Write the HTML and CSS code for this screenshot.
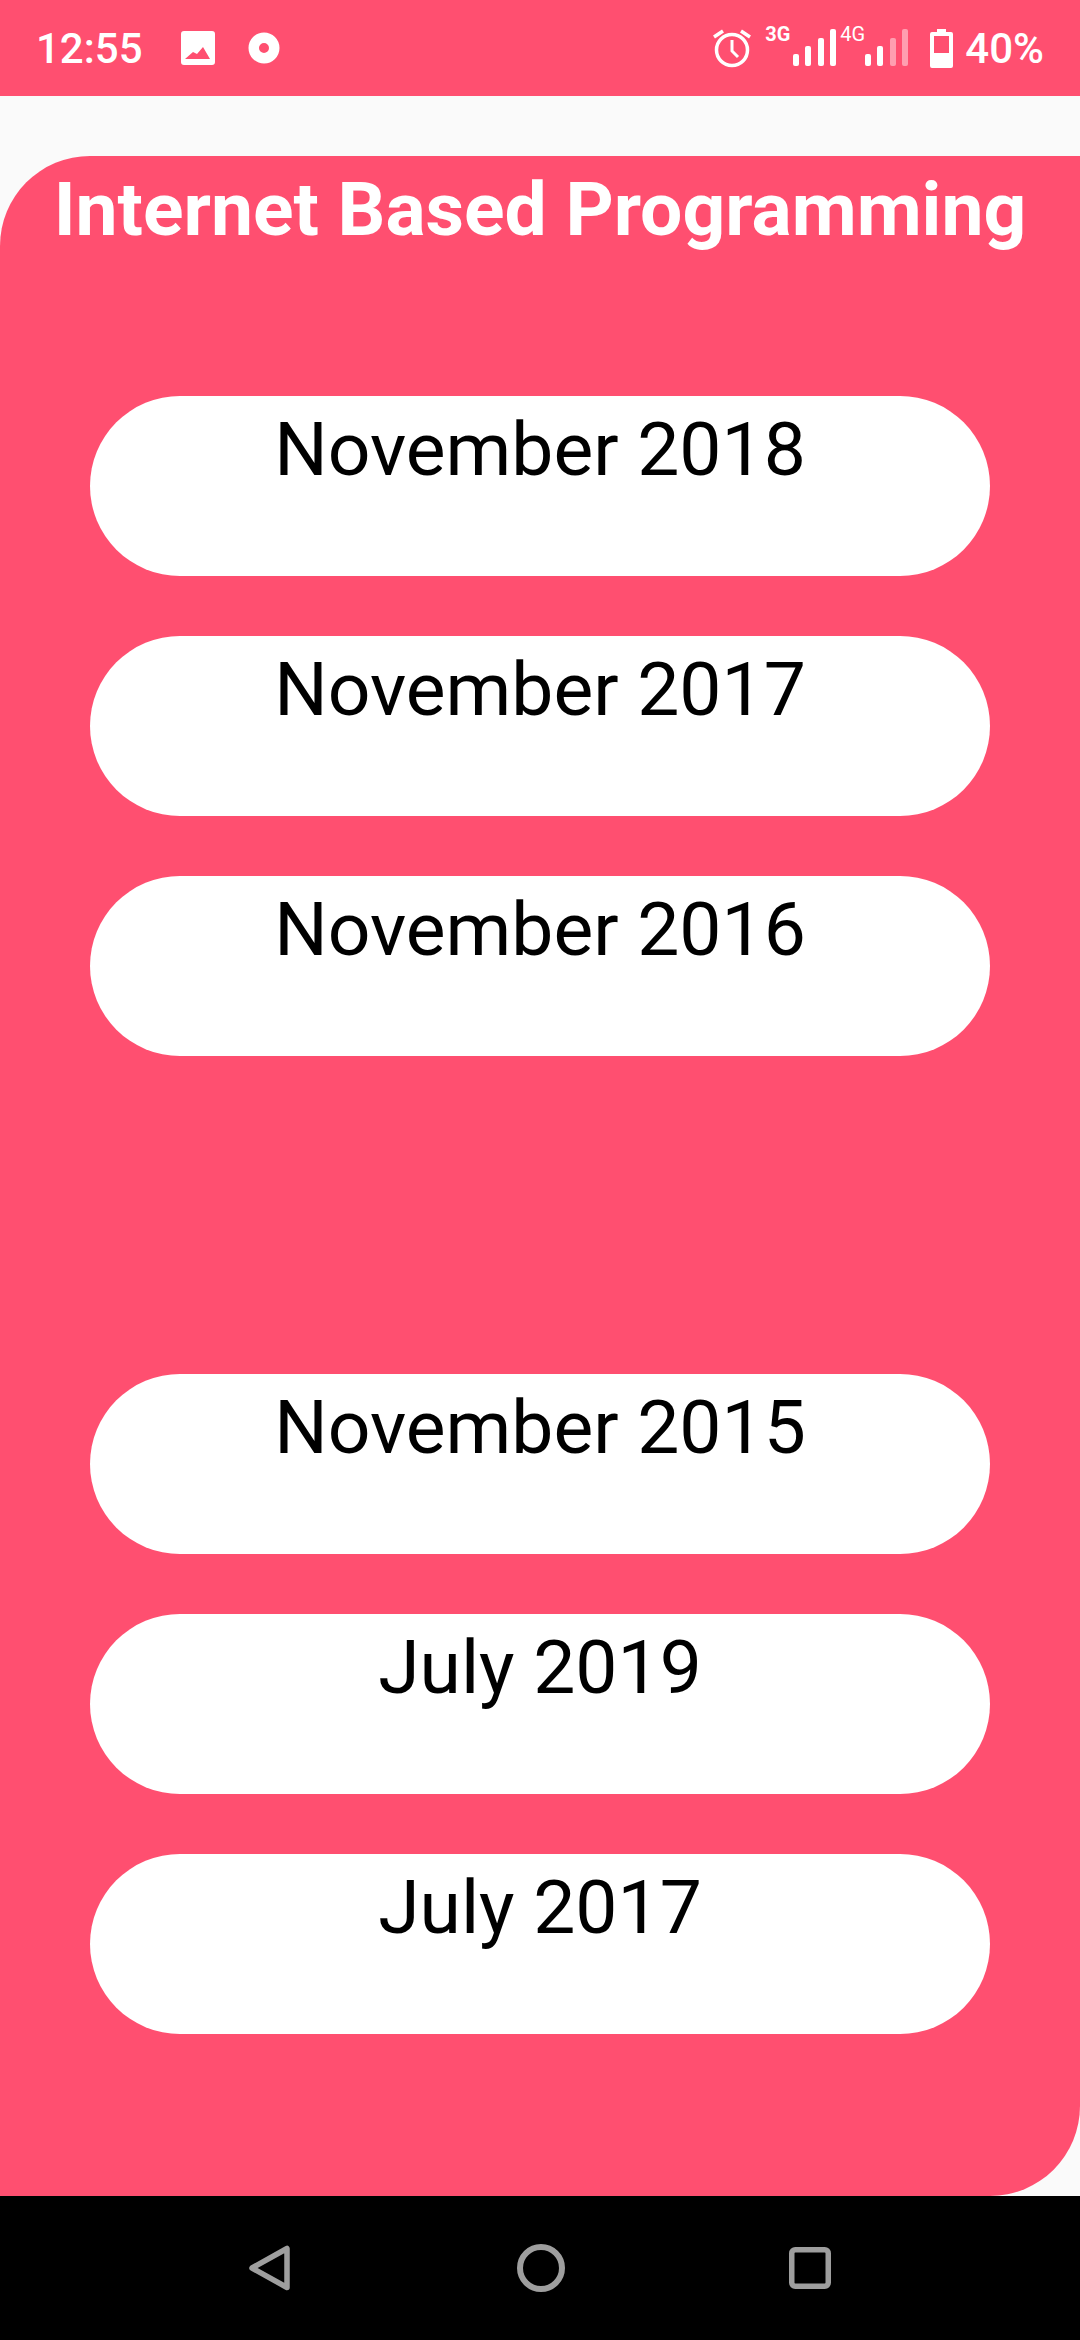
FILE: index.html
```html
<!DOCTYPE html>
<html>
<head>
  <title>Internet Based Programming</title>
  <link rel="stylesheet" href="styles.css">
</head>
<body>
  <div class="status-bar">
    <span class="clock">12:55</span>
    <svg class="icon-image" width="34" height="34" viewBox="0 0 34 34">
      <path fill="#fff" fill-rule="evenodd" d="M3 0h28a3 3 0 0 1 3 3v28a3 3 0 0 1-3 3H3a3 3 0 0 1-3-3V3a3 3 0 0 1 3-3zM4 28h25l-7-12-6 7-4-2z"/>
    </svg>
    <svg class="icon-record" width="32" height="32" viewBox="0 0 32 32">
      <path fill="#fff" fill-rule="evenodd" d="M16 .5a15.500 15.500 0 1 1 0 31a15.500 15.500 0 0 1 0-31zM16 11a5 5 0 1 0 0 10a5 5 0 0 0 0-10z"/>
    </svg>
    <div class="status-right">
      <svg class="icon-alarm" width="38" height="40" viewBox="0 0 38 40">
        <circle cx="19" cy="22" r="15.500" fill="none" stroke="#fff" stroke-width="3.500"/>
        <path d="M19 12v11l6 6" fill="none" stroke="#fff" stroke-width="3"/>
        <path d="M1 9l9-6M37 9l-9-6" fill="none" stroke="#fff" stroke-width="3.500"/>
      </svg>
      <div class="signal signal-3g">
        <span class="net">3G</span>
        <svg width="44" height="38" viewBox="0 0 44 38">
          <rect x="0" y="25" width="6" height="12" rx="2" fill="#fff"/>
          <rect x="12" y="17" width="6" height="20" rx="2" fill="#fff"/>
          <rect x="25" y="9" width="6" height="28" rx="2" fill="#fff"/>
          <rect x="37" y="0" width="6" height="37" rx="2" fill="#fff"/>
        </svg>
      </div>
      <div class="signal signal-4g">
        <span class="net">4G</span>
        <svg width="44" height="38" viewBox="0 0 44 38">
          <rect x="0" y="25" width="6" height="12" rx="2" fill="#fff"/>
          <rect x="12" y="17" width="6" height="20" rx="2" fill="#fff"/>
          <rect x="25" y="9" width="6" height="28" rx="2" fill="#fff" fill-opacity="0.45"/>
          <rect x="37" y="0" width="6" height="37" rx="2" fill="#fff" fill-opacity="0.45"/>
        </svg>
      </div>
      <svg class="icon-battery" width="23" height="39" viewBox="0 0 23 39">
        <path fill="#fff" fill-rule="evenodd" d="M7 0h9v3h5a2 2 0 0 1 2 2v32a2 2 0 0 1-2 2H2a2 2 0 0 1-2-2V5a2 2 0 0 1 2-2h5zM4 7v17h15V7z"/>
      </svg>
      <span class="battery-text">40%</span>
    </div>
  </div>

  <div class="card">
    <h1>Internet Based Programming</h1>
    <div class="paper-list first">
      <button>November 2018</button>
      <button>November 2017</button>
      <button>November 2016</button>
    </div>
    <div class="paper-list second">
      <button>November 2015</button>
      <button>July 2019</button>
      <button>July 2017</button>
    </div>
  </div>

  <div class="nav-bar">
    <svg width="44" height="48" viewBox="0 0 44 48">
      <path d="M39 4.500v39L4 24z" fill="none" stroke="#9e9e9e" stroke-width="5.500" stroke-linejoin="round"/>
    </svg>
    <svg width="48" height="48" viewBox="0 0 48 48">
      <circle cx="24" cy="24" r="21" fill="none" stroke="#9e9e9e" stroke-width="6"/>
    </svg>
    <svg width="42" height="42" viewBox="0 0 42 42">
      <rect x="2.750" y="2.750" width="36.500" height="36.500" rx="3.500" fill="none" stroke="#9e9e9e" stroke-width="5.500"/>
    </svg>
  </div>
</body>
</html>
```

FILE: styles.css
```css
body {
  margin: 0;
  width: 1080px;
  height: 2340px;
  overflow: hidden;
  background: #fafafa;
  font-family: Roboto, sans-serif;
  display: flex;
  flex-direction: column;
}
.status-bar {
  height: 96px;
  background: #ff4f70;
  color: white;
  display: flex;
  align-items: center;
  padding: 0 36px;
  flex: none;
}
.clock {
  font-size: 42px;
  font-weight: 500;
}
.icon-image {
  margin-left: 38px;
}
.icon-record {
  margin-left: 33px;
}
.status-right {
  margin-left: auto;
  display: flex;
  align-items: center;
}
.signal {
  display: flex;
  align-items: flex-start;
  height: 38px;
}
.signal-3g {
  margin-left: 14px;
}
.signal-4g {
  margin-left: 3px;
}
.net {
  font-size: 20px;
  line-height: 18px;
  margin-top: -4px;
}
.signal-3g .net {
  font-weight: 700;
  width: 28px;
}
.signal-4g .net {
  font-weight: 400;
  width: 25px;
}
.icon-battery {
  margin-left: 21px;
}
.battery-text {
  font-size: 42px;
  font-weight: 500;
  margin-left: 12px;
}
.card {
  margin-top: 60px;
  height: 2040px;
  flex: none;
  background: #ff4f70;
  border-radius: 90px 0 90px 0;
}
.card h1 {
  margin: 0;
  padding-top: 9px;
  color: white;
  font-size: 75px;
  font-weight: 700;
  line-height: 88px;
  text-align: center;
}
.paper-list {
  display: flex;
  flex-direction: column;
  gap: 60px;
  padding: 0 90px;
}
.first {
  margin-top: 143px;
}
.second {
  margin-top: 318px;
}
.paper-list button {
  height: 180px;
  border: none;
  border-radius: 90px;
  background: white;
  color: black;
  font-family: Roboto, sans-serif;
  font-size: 75px;
  line-height: 88px;
  padding: 9px 0 0;
  display: flex;
  justify-content: center;
  align-items: flex-start;
}
.nav-bar {
  flex: 1;
  background: black;
  display: flex;
  align-items: center;
  justify-content: space-between;
  padding: 0 249px 0 248px;
}
```
